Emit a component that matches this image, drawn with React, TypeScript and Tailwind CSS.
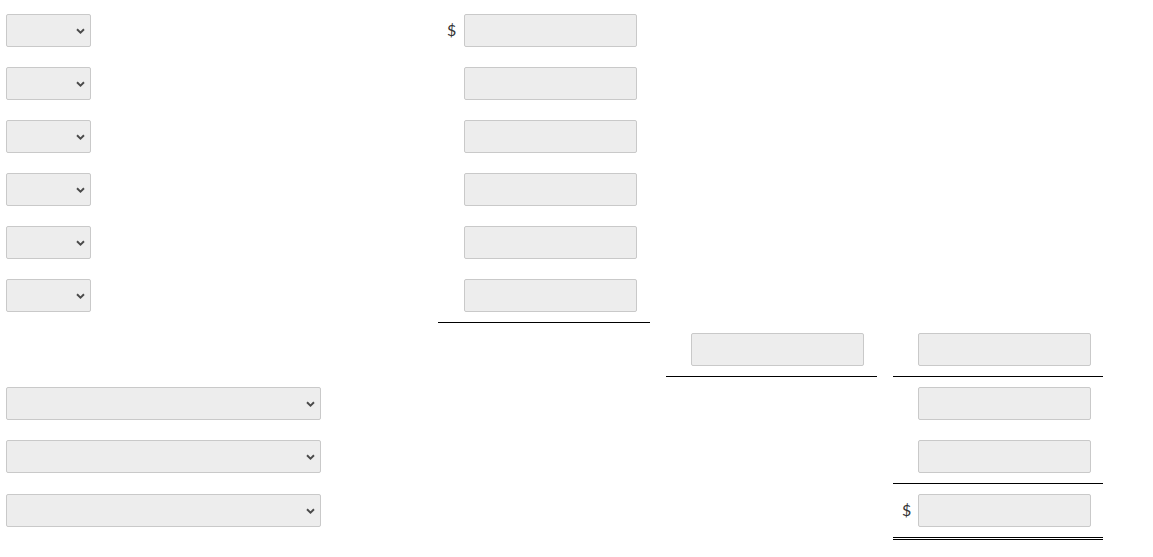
import React from "react";

type Line = "none" | "single" | "double";

function Chevron() {
  return (
    <svg
      className="pointer-events-none absolute right-[6px] top-1/2 -translate-y-1/2"
      width="9"
      height="6"
      viewBox="0 0 9 6"
    >
      <path d="M1 1.2 L4.5 4.6 L8 1.2" fill="none" stroke="#4a4a4a" strokeWidth="1.9" />
    </svg>
  );
}

function Dropdown({ wide }: { wide?: boolean }) {
  return (
    <div className={`relative ml-[6px] ${wide ? "w-[315px]" : "w-[85px]"}`}>
      <select className="block h-[33px] w-full appearance-none rounded-[2px] border border-[#c9c9c9] bg-[#ededed] outline-none">
        <option></option>
      </select>
      <Chevron />
    </div>
  );
}

function Amount({
  dollar,
  line = "none",
  width,
  lead = "w-[25px]",
}: {
  dollar?: boolean;
  line?: Line;
  width: string;
  lead?: string;
}) {
  const border =
    line === "single"
      ? "border-b border-black"
      : line === "double"
      ? "border-b-[3px] border-double border-black"
      : "";
  return (
    <div className={`flex shrink-0 items-center py-[10px] ${width} ${border}`}>
      <span className={`${lead} -mt-[2px] pl-[9px] text-[16px] leading-none text-[#333]`}>{dollar ? "$" : ""}</span>
      <input
        type="text"
        className="h-[33px] w-[173px] rounded-[2px] border border-[#c9c9c9] bg-[#ededed] outline-none"
      />
    </div>
  );
}

function Blank({ width }: { width: string }) {
  return <div className={`shrink-0 ${width}`} />;
}

export default function App() {
  const small = [0, 1, 2, 3, 4, 5];
  return (
    <div className="min-h-screen bg-white pt-[4px] font-['Lato',sans-serif]">
      {small.map((i) => (
        <div key={i} className="flex items-start">
          <div className="w-[438px] shrink-0 py-[10px]">
            <Dropdown />
          </div>
          <Amount width="w-[212px]" lead="w-[26px]" dollar={i === 0} line={i === 5 ? "single" : "none"} />
        </div>
      ))}

      <div className="flex items-start">
        <Blank width="w-[438px]" />
        <Blank width="w-[212px]" />
        <div className="ml-[16px]">
          <Amount width="w-[211px]" line="single" />
        </div>
        <div className="ml-[16px]">
          <Amount width="w-[210px]" line="single" />
        </div>
      </div>

      {[0, 1, 2].map((i) => (
        <div key={i} className="flex items-start">
          <div className="w-[438px] shrink-0 py-[10px]">
            <Dropdown wide />
          </div>
          <Blank width="w-[212px]" />
          <Blank width="ml-[16px] w-[211px]" />
          <div className="ml-[16px]">
            <Amount
              width="w-[210px]"
              dollar={i === 2}
              line={i === 1 ? "single" : i === 2 ? "double" : "none"}
            />
          </div>
        </div>
      ))}
    </div>
  );
}
